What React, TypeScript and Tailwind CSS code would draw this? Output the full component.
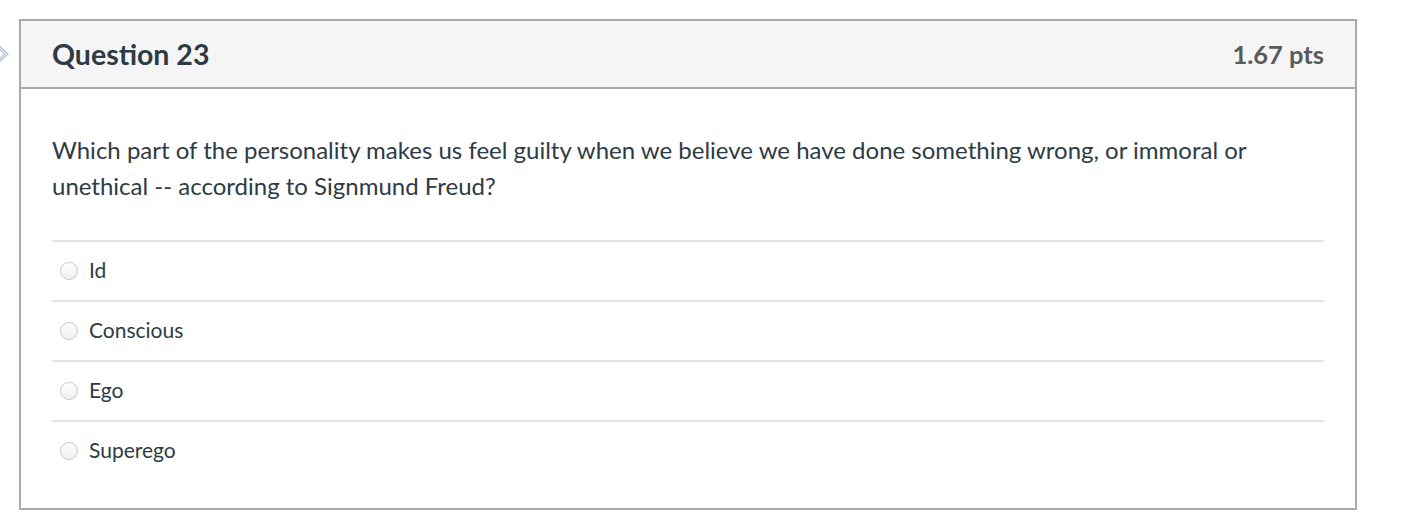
const answers = ["Id", "Conscious", "Ego", "Superego"];

export default function App() {
  return (
    <div
      className="relative min-h-[530px] w-[1402px] bg-white pl-[19px] pt-[19px]"
      style={{ fontFamily: "Lato, 'Open Sans', sans-serif" }}
    >
      {/* collapsed nav arrow, cut off at the page edge */}
      <svg
        className="absolute left-[-9px] top-[42px]"
        width="18"
        height="24"
        viewBox="0 0 18 24"
        fill="none"
      >
        <path
          d="M3 2 L14 12 L3 22 L6 22 L17 12 L6 2 Z"
          fill="none"
          stroke="#b8c8d6"
          strokeWidth="1.5"
          strokeLinejoin="round"
        />
      </svg>

      <div className="w-[1338px] border-2 border-[#aaaaaa]">
        <div className="flex h-[68px] items-center justify-between border-b-2 border-[#aaaaaa] bg-[#f5f5f5] px-[31px]">
          <h2 className="text-[28.5px] font-bold text-[#2d3b45]">Question 23</h2>
          <span className="text-[25.5px] font-bold text-[#5a5a5a]">1.67 pts</span>
        </div>

        <div className="px-[31px] pb-[28px] pt-[43px]">
          <p className="text-[24px] leading-[36px] text-[#2d3b45]">
            Which part of the personality makes us feel guilty when we believe we have done something wrong, or immoral or
            unethical -- according to Signmund Freud?
          </p>

          <div className="mt-[36px]">
            {answers.map((a) => (
              <div
                key={a}
                className="flex h-[60px] items-center border-t-2 border-[#e3e3e3]"
              >
                <span className="ml-[8px] h-[18px] w-[18px] rounded-full border border-[#c9c9c9] bg-gradient-to-b from-white to-[#efefef]" />
                <span className="ml-[11px] -mt-[3px] text-[21px] text-[#2d3b45]">{a}</span>
              </div>
            ))}
          </div>
        </div>
      </div>
    </div>
  );
}
